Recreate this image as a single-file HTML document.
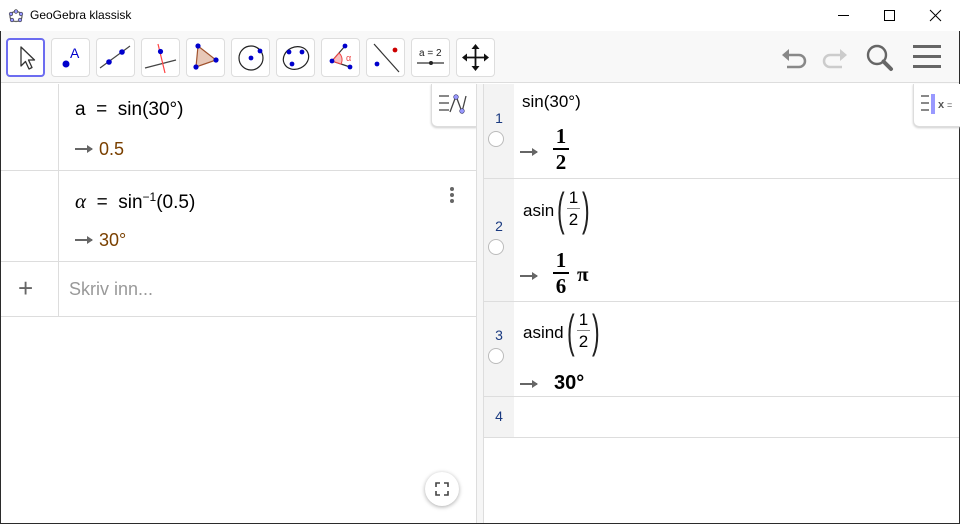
<!DOCTYPE html>
<html><head><meta charset="utf-8"><style>
*{margin:0;padding:0;box-sizing:border-box}
body{width:960px;height:524px;overflow:hidden;background:#fff;font-family:"Liberation Sans",sans-serif;position:relative;color:#000}
.a{position:absolute}
.tb{position:absolute;top:38px;width:39px;height:39px;border:1px solid #ddd;border-radius:4px;background:#fff}
.m{font-family:"Liberation Sans",sans-serif}
.ser{font-family:"Liberation Serif",serif}
.hl{position:absolute;height:1px;background:#ddd}
.vl{position:absolute;width:1px;background:#ddd}
.ar{position:absolute;width:17px;height:2px;background:#666}
.ar:after{content:"";position:absolute;right:-1px;top:-3px;border-left:6px solid #666;border-top:4px solid transparent;border-bottom:4px solid transparent}
.circ{position:absolute;width:16px;height:16px;border:1.5px solid #bbb;border-radius:50%;background:#fff}
.num{position:absolute;font-size:14px;color:#1a3a80;width:30px;text-align:center}
</style></head><body>
<div class="a" style="left:0;top:0;width:960px;height:524px;border:1px solid #2b2b2b;border-top:none"></div>
<div class="a" style="left:0;top:0;width:960px;height:31px;background:#fff"></div>
<svg class="a" style="left:8px;top:8px" width="16" height="16" viewBox="0 0 16 16"><ellipse cx="8" cy="8.5" rx="6" ry="5" fill="none" stroke="#666" stroke-width="1.2"/><g fill="#99f" stroke="#333" stroke-width=".6"><circle cx="3" cy="6" r="1.8"/><circle cx="8" cy="3.5" r="1.8"/><circle cx="13" cy="6" r="1.8"/><circle cx="12" cy="12" r="1.8"/><circle cx="4" cy="12" r="1.8"/></g></svg>
<div class="a" style="left:30px;top:8px;font-size:12px">GeoGebra klassisk</div>
<div class="a" style="left:838px;top:15px;width:11px;height:1px;background:#000"></div>
<div class="a" style="left:884px;top:10px;width:11px;height:11px;border:1px solid #000"></div>
<svg class="a" style="left:929px;top:9px" width="13" height="13"><path d="M1 1L12 12M12 1L1 12" stroke="#000" stroke-width="1"/></svg>
<div class="a" style="left:1px;top:31px;width:958px;height:52px;background:#f8f8f8;border-bottom:1px solid #ddd"></div>
<div class="tb" style="left:6px;border:2px solid #6c6cf0"><svg width="35" height="35" viewBox="0 0 35 35"><path d="M13 7L13 26L17.5 21.5L21 29L24 27.5L20.5 20L26.5 20Z" fill="#fff" stroke="#333" stroke-width="1.3" stroke-linejoin="round"/></svg></div>
<div class="tb" style="left:51px"><svg width="37" height="37"><circle cx="14" cy="25" r="3.5" fill="#00c"/><text x="18" y="19" font-size="14" fill="#00c" font-family="Liberation Sans">A</text></svg></div>
<div class="tb" style="left:96px"><svg width="37" height="37"><path d="M3 29L33 7" stroke="#444" stroke-width="1.2"/><circle cx="12" cy="23" r="2.8" fill="#00c"/><circle cx="25" cy="13" r="2.8" fill="#00c"/></svg></div>
<div class="tb" style="left:141px"><svg width="37" height="37"><path d="M3 29L34 21" stroke="#444" stroke-width="1.2"/><path d="M16 5L23 34" stroke="#f44" stroke-width="1.2"/><circle cx="18.5" cy="12.5" r="2.6" fill="#00c"/></svg></div>
<div class="tb" style="left:186px"><svg width="37" height="37"><path d="M11 7L29 21L9 28Z" fill="#e8c8b8" stroke="#a0522d" stroke-width="1.2"/><circle cx="11" cy="7" r="2.6" fill="#00c"/><circle cx="29" cy="21" r="2.6" fill="#00c"/><circle cx="9" cy="28" r="2.6" fill="#00c"/></svg></div>
<div class="tb" style="left:231px"><svg width="37" height="37"><circle cx="19" cy="19" r="12" fill="none" stroke="#222" stroke-width="1.2"/><circle cx="19" cy="19" r="2.4" fill="#00c"/><circle cx="28" cy="12" r="2.4" fill="#00c"/></svg></div>
<div class="tb" style="left:276px"><svg width="37" height="37"><ellipse cx="19" cy="19" rx="13" ry="11" fill="none" stroke="#222" stroke-width="1.2" transform="rotate(-25 19 19)"/><circle cx="12" cy="13" r="2.4" fill="#00c"/><circle cx="25" cy="13" r="2.4" fill="#00c"/><circle cx="15" cy="25" r="2.4" fill="#00c"/></svg></div>
<div class="tb" style="left:321px"><svg width="37" height="37"><path d="M10 22L23 7M10 22L28 28" stroke="#333" stroke-width="1.2"/><path d="M10 22L17 14A9 9 0 0 1 19 25Z" fill="#f8c0c0" stroke="#e44" stroke-width="1"/><text x="24" y="22" font-size="9" fill="#e44">α</text><circle cx="10" cy="22" r="2.4" fill="#00c"/><circle cx="23" cy="7" r="2.4" fill="#00c"/><circle cx="28" cy="28" r="2.4" fill="#00c"/></svg></div>
<div class="tb" style="left:366px"><svg width="37" height="37"><path d="M7 5L32 33" stroke="#333" stroke-width="1.2"/><circle cx="28" cy="11" r="2.4" fill="#c00"/><circle cx="10" cy="25" r="2.4" fill="#00c"/></svg></div>
<div class="tb" style="left:411px"><svg width="37" height="37"><text x="7" y="17" font-size="10" fill="#222" font-family="Liberation Sans">a = 2</text><path d="M5 24H32" stroke="#333" stroke-width="1.2"/><circle cx="19" cy="24" r="2" fill="#222"/></svg></div>
<div class="tb" style="left:456px"><svg width="37" height="37"><path d="M18.5 7V30M7 18.5H30" stroke="#111" stroke-width="1.8"/><path d="M18.5 5L14.5 10H22.5ZM18.5 32L14.5 27H22.5ZM5 18.5L10 14.5V22.5ZM32 18.5L27 14.5V22.5Z" fill="#111"/></svg></div>
<svg class="a" style="left:780px;top:45px" width="32" height="28"><path d="M4 10H19A6 6 0 0 1 19 22H7" fill="none" stroke="#888" stroke-width="2.5"/><path d="M2 10L9 4V16Z" fill="#888"/></svg>
<svg class="a" style="left:817px;top:45px" width="32" height="28"><path d="M28 10H13A6 6 0 0 0 13 22H25" fill="none" stroke="#ccc" stroke-width="2.5"/><path d="M30 10L23 4V16Z" fill="#ccc"/></svg>
<svg class="a" style="left:864px;top:42px" width="32" height="32"><circle cx="13" cy="13" r="9" fill="none" stroke="#666" stroke-width="2.4"/><path d="M19.5 19.5L27 27" stroke="#666" stroke-width="4" stroke-linecap="round"/></svg>
<div class="a" style="left:913px;top:45px;width:28px;height:3px;background:#666"></div>
<div class="a" style="left:913px;top:55px;width:28px;height:3px;background:#666"></div>
<div class="a" style="left:913px;top:65px;width:28px;height:3px;background:#666"></div>

<div class="vl" style="left:58px;top:84px;height:233px"></div>
<div class="hl" style="left:1px;top:170px;width:475px"></div>
<div class="hl" style="left:1px;top:261px;width:475px"></div>
<div class="hl" style="left:1px;top:316px;width:475px"></div>
<div class="a m" style="left:75px;top:99px;font-size:19px">a &nbsp;= &nbsp;sin(30°)</div>
<div class="ar" style="left:75px;top:148px"></div>
<div class="a m" style="left:99px;top:139px;font-size:18px;color:#7a4000">0.5</div>
<div class="a m" style="left:75px;top:189px;font-size:19px"><i class="ser" style="font-size:21px">α</i> &nbsp;= &nbsp;sin<sup style="font-size:12px;vertical-align:7px">−1</sup>(0.5)</div>
<div class="ar" style="left:75px;top:239px"></div>
<div class="a m" style="left:99px;top:230px;font-size:18px;color:#7a4000">30°</div>
<div class="a" style="left:450px;top:187px;width:4px;height:4px;border-radius:2px;background:#666;box-shadow:0 6px 0 #666,0 12px 0 #666"></div>
<div class="a" style="left:18px;top:275px;font-size:26px;color:#666;line-height:26px">+</div>
<div class="a" style="left:69px;top:279px;font-size:18px;color:#999">Skriv inn...</div>
<div class="a" style="left:431px;top:84px;width:46px;height:43px;background:#fff;border:1px solid #ddd;border-top:none;border-right:none;border-radius:0 0 0 6px;box-shadow:0 1px 2px #ccc"></div>
<svg class="a" style="left:437px;top:92px" width="36" height="24"><path d="M2 4H12M2 11H12M2 18H12" stroke="#888" stroke-width="2"/><path d="M13 20L19 4L25 20L29 4" fill="none" stroke="#444" stroke-width="1.3"/><circle cx="19" cy="5" r="2.3" fill="#99f" stroke="#336" stroke-width=".6"/><circle cx="25" cy="19" r="2.3" fill="#99f" stroke="#336" stroke-width=".6"/></svg>
<div class="a" style="left:425px;top:472px;width:34px;height:34px;border-radius:17px;background:#fff;box-shadow:0 1px 4px #aaa"></div>
<svg class="a" style="left:435px;top:482px" width="14" height="14"><path d="M1 5V1H5M9 1H13V5M13 9V13H9M5 13H1V9" fill="none" stroke="#444" stroke-width="1.6"/></svg>

<div class="a" style="left:476px;top:84px;width:8px;height:439px;background:#f6f6f6;border-left:1px solid #ddd;border-right:1px solid #ddd"></div>

<div class="a" style="left:484px;top:84px;width:30px;height:353px;background:#f3f3f3"></div>
<div class="hl" style="left:484px;top:178px;width:475px"></div>
<div class="hl" style="left:484px;top:301px;width:475px"></div>
<div class="hl" style="left:484px;top:396px;width:475px"></div>
<div class="hl" style="left:484px;top:437px;width:475px"></div>
<div class="num" style="left:484px;top:110px">1</div><div class="circ" style="left:488px;top:131px"></div>
<div class="num" style="left:484px;top:218px">2</div><div class="circ" style="left:488px;top:239px"></div>
<div class="num" style="left:484px;top:327px">3</div><div class="circ" style="left:488px;top:348px"></div>
<div class="num" style="left:484px;top:408px">4</div>
<div class="a m" style="left:522px;top:92px;font-size:17px">sin(30°)</div>
<div class="ar" style="left:520px;top:151px"></div>
<div class="a ser" style="left:553px;top:125px;font-size:21px;font-weight:bold;text-align:center;width:16px;line-height:22px">1<div style="height:1.5px;background:#000;margin:1px 0"></div>2</div>
<div class="a m" style="left:523px;top:201px;font-size:17px">asin</div>
<div class="a" style="left:557px;top:186px;font-size:46px;line-height:46px;transform:scaleX(.5);transform-origin:left;color:#222">(</div>
<div class="a m" style="left:567px;top:188px;font-size:17px;text-align:center;width:13px;line-height:19px">1<div style="height:1px;background:#888;margin:1px 0"></div>2</div>
<div class="a" style="left:582px;top:186px;font-size:46px;line-height:46px;transform:scaleX(.5);transform-origin:left;color:#222">)</div>
<div class="ar" style="left:520px;top:275px"></div>
<div class="a ser" style="left:553px;top:249px;font-size:21px;font-weight:bold;text-align:center;width:16px;line-height:22px">1<div style="height:1.5px;background:#000;margin:1px 0"></div>6</div>
<div class="a ser" style="left:577px;top:262px;font-size:21px;font-weight:bold">π</div>
<div class="a m" style="left:523px;top:323px;font-size:17px">asind</div>
<div class="a" style="left:567px;top:308px;font-size:46px;line-height:46px;transform:scaleX(.5);transform-origin:left;color:#222">(</div>
<div class="a m" style="left:577px;top:310px;font-size:17px;text-align:center;width:13px;line-height:19px">1<div style="height:1px;background:#888;margin:1px 0"></div>2</div>
<div class="a" style="left:592px;top:308px;font-size:46px;line-height:46px;transform:scaleX(.5);transform-origin:left;color:#222">)</div>
<div class="ar" style="left:520px;top:383px"></div>
<div class="a m" style="left:554px;top:372px;font-size:20px;font-weight:bold">30°</div>
<div class="a" style="left:913px;top:84px;width:47px;height:43px;background:#fff;border:1px solid #ddd;border-top:none;border-right:none;border-radius:0 0 0 6px;box-shadow:0 1px 2px #ccc"></div>
<svg class="a" style="left:919px;top:92px" width="40" height="24"><path d="M2 4H10M2 11H10M2 18H10" stroke="#888" stroke-width="2"/><rect x="12" y="2" width="4" height="20" fill="#99f"/><text x="19" y="16" font-size="11" font-weight="bold" fill="#555" font-family="Liberation Sans">x</text><text x="28" y="16" font-size="9" fill="#555" font-family="Liberation Sans">=</text></svg>
</body></html>
